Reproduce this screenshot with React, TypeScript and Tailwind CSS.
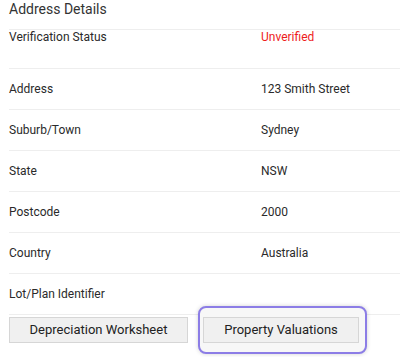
import React from "react";

const rows: { label: string; value: string; red?: boolean }[] = [
  { label: "Address", value: "123 Smith Street" },
  { label: "Suburb/Town", value: "Sydney" },
  { label: "State", value: "NSW" },
  { label: "Postcode", value: "2000" },
  { label: "Country", value: "Australia" },
  { label: "Lot/Plan Identifier", value: "" },
];

export default function App() {
  return (
    <div
      className="w-[400px] h-[357px] bg-white text-[12px] text-[#2a2a2a] overflow-hidden"
      style={{ fontFamily: "Roboto, 'Liberation Sans', sans-serif" }}
    >
      <div className="h-[29px] pl-[9px] text-[14px] leading-[18px] text-[#333]">
        Address Details
      </div>
      <div className="ml-[9px]">
        <div className="h-[39px] border-t border-[#eeeeee] flex leading-[12px]">
          <div className="w-[252px] pt-[1px]">Verification Status</div>
          <div className="pt-[1px] text-[#ee1c1c]">Unverified</div>
        </div>
        {rows.map((r) => (
          <div
            key={r.label}
            className="h-[41px] border-t border-[#eeeeee] flex items-center"
          >
            <div className="w-[252px]">{r.label}</div>
            <div>{r.value}</div>
          </div>
        ))}
        <div className="border-t border-[#eeeeee] pt-[2px] flex gap-[15px]">
          <button className="w-[179px] h-[26px] bg-[#f0f0f0] border border-[#d6d6d6] text-[13px] text-[#222]">
            Depreciation Worksheet
          </button>
          <div className="relative">
            <div className="absolute left-[-5px] right-[-8px] top-[-11px] bottom-[-11px] rounded-[8px] border-2 border-[#8c7de6] bg-[#f7f7f7] shadow-[0_0_4px_rgba(0,0,0,0.18)]" />
            <button className="relative w-[156px] h-[26px] bg-[#f0f0f0] border border-[#d6d6d6] text-[13px] text-[#222]">
              Property Valuations
            </button>
          </div>
        </div>
      </div>
    </div>
  );
}
